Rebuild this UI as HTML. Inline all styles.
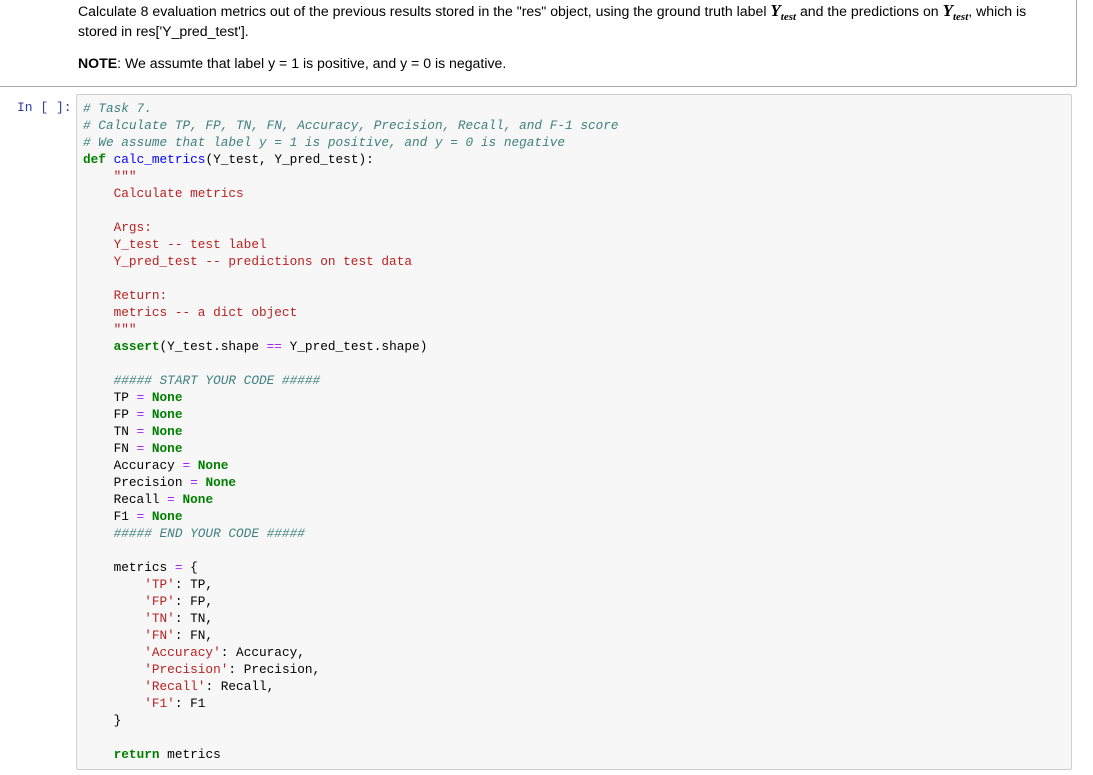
<!DOCTYPE html>
<html><head><meta charset="utf-8"><style>
body{margin:0;background:#fff;width:1093px;height:775px;overflow:hidden;position:relative;font-family:"Liberation Sans",Arial,sans-serif;}
.md{position:absolute;left:-2px;top:-2px;width:1077px;height:87px;border:1px solid #ababab;border-radius:2px;}
.mdt{position:absolute;left:78px;font-size:14.1px;color:#000;white-space:nowrap;}
.y{font-family:"Liberation Serif",serif;font-style:italic;font-weight:bold;font-size:17px;}
.y sub{font-size:11px;vertical-align:-4px;}
.prompt{position:absolute;left:17px;top:99px;font-family:"Liberation Mono",monospace;font-size:13px;color:#303f9f;line-height:17px;}
.code{position:absolute;left:76px;top:94px;width:994px;height:674px;background:#f7f7f7;border:1px solid #cfcfcf;border-radius:2px;}
pre{margin:0;position:absolute;left:6px;top:5px;font-family:"Liberation Mono",monospace;font-size:12.75px;line-height:17px;color:#000;}
.c{color:#408080;font-style:italic}.k{color:#008000;font-weight:bold}.f{color:#0000ff}.o{color:#aa22ff}.s{color:#ba2121}
</style></head><body>
<div class="md"></div>
<div class="mdt" style="top:1px">Calculate 8 evaluation metrics out of the previous results stored in the "res" object, using the ground truth label <span class="y">Y<sub>test</sub></span> and the predictions on <span class="y">Y<sub>test</sub></span>, which is</div>
<div class="mdt" style="top:23px">stored in res['Y_pred_test'].</div>
<div class="mdt" style="top:55px"><b>NOTE</b>: We assumte that label y = 1 is positive, and y = 0 is negative.</div>
<div class="prompt">In [ ]:</div>
<div class="code"><pre><span class="c"># Task 7.</span>
<span class="c"># Calculate TP, FP, TN, FN, Accuracy, Precision, Recall, and F-1 score</span>
<span class="c"># We assume that label y = 1 is positive, and y = 0 is negative</span>
<span class="k">def</span> <span class="f">calc_metrics</span>(Y_test, Y_pred_test):
    <span class="s">"""</span>
<span class="s">    Calculate metrics</span>

<span class="s">    Args:</span>
<span class="s">    Y_test -- test label</span>
<span class="s">    Y_pred_test -- predictions on test data</span>

<span class="s">    Return:</span>
<span class="s">    metrics -- a dict object</span>
<span class="s">    """</span>
    <span class="k">assert</span>(Y_test.shape <span class="o">==</span> Y_pred_test.shape)

    <span class="c">##### START YOUR CODE #####</span>
    TP <span class="o">=</span> <span class="k">None</span>
    FP <span class="o">=</span> <span class="k">None</span>
    TN <span class="o">=</span> <span class="k">None</span>
    FN <span class="o">=</span> <span class="k">None</span>
    Accuracy <span class="o">=</span> <span class="k">None</span>
    Precision <span class="o">=</span> <span class="k">None</span>
    Recall <span class="o">=</span> <span class="k">None</span>
    F1 <span class="o">=</span> <span class="k">None</span>
    <span class="c">##### END YOUR CODE #####</span>

    metrics <span class="o">=</span> {
        <span class="s">'TP'</span>: TP,
        <span class="s">'FP'</span>: FP,
        <span class="s">'TN'</span>: TN,
        <span class="s">'FN'</span>: FN,
        <span class="s">'Accuracy'</span>: Accuracy,
        <span class="s">'Precision'</span>: Precision,
        <span class="s">'Recall'</span>: Recall,
        <span class="s">'F1'</span>: F1
    }

    <span class="k">return</span> metrics</pre></div>
</body></html>
